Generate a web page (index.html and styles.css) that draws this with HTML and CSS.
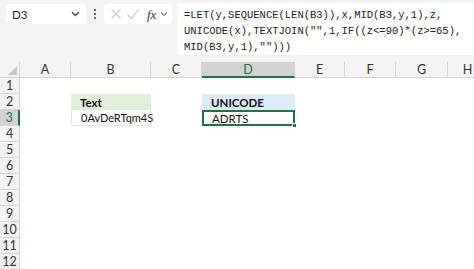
FILE: index.html
```html
<!DOCTYPE html>
<html>
<head>
<meta charset="utf-8">
<link rel="stylesheet" href="styles.css">
</head>
<body>
<div class="app">
  <div class="toolbar">
    <div class="namebox">
      <span class="ref">D3</span>
      <svg class="chev" width="9" height="6" viewBox="0 0 9 6"><path d="M1 1l3.5 3.5L8 1" fill="none" stroke="#444" stroke-width="1.3"/></svg>
    </div>
    <div class="dots">
      <svg width="4" height="12" viewBox="0 0 4 12"><circle cx="2" cy="2" r="1.1" fill="#444"/><circle cx="2" cy="6" r="1.1" fill="#444"/><circle cx="2" cy="10" r="1.1" fill="#444"/></svg>
    </div>
    <div class="fxbox">
      <svg width="12" height="12" viewBox="0 0 12 12"><path d="M1.5 1.5l9 9M10.5 1.5l-9 9" stroke="#c8c8c8" stroke-width="1.2"/></svg>
      <svg width="14" height="12" viewBox="0 0 14 12"><path d="M1.5 6.5l4 4L12.5 1.5" fill="none" stroke="#c8c8c8" stroke-width="1.2"/></svg>
      <span class="fx">fx</span>
      <svg class="chev" width="8" height="6" viewBox="0 0 8 6"><path d="M1 1.5l3 3 3-3" fill="none" stroke="#888" stroke-width="1.1"/></svg>
    </div>
    <div class="formula">=LET(y,SEQUENCE(LEN(B3)),x,MID(B3,y,1),z,<br>UNICODE(x),TEXTJOIN("",1,IF((z&lt;=90)*(z&gt;=65),<br>MID(B3,y,1),"")))</div>
  </div>
  <div class="sheet">
    <div class="corner"><span class="tri"></span></div>
    <div class="ch">A</div>
    <div class="ch">B</div>
    <div class="ch">C</div>
    <div class="ch sel">D</div>
    <div class="ch">E</div>
    <div class="ch">F</div>
    <div class="ch">G</div>
    <div class="ch">H</div>

    <div class="rh">1</div><div class="c"></div><div class="c"></div><div class="c"></div><div class="c"></div><div class="c"></div><div class="c"></div><div class="c"></div><div class="c"></div>
    <div class="rh">2</div><div class="c"></div><div class="c hdr-green">Text</div><div class="c"></div><div class="c hdr-blue">UNICODE</div><div class="c"></div><div class="c"></div><div class="c"></div><div class="c"></div>
    <div class="rh rsel">3</div><div class="c"></div><div class="c val">0AvDeRTqm4S</div><div class="c"></div><div class="c active">ADRTS<span class="handle"></span></div><div class="c"></div><div class="c"></div><div class="c"></div><div class="c"></div>
    <div class="rh">4</div><div class="c"></div><div class="c"></div><div class="c"></div><div class="c"></div><div class="c"></div><div class="c"></div><div class="c"></div><div class="c"></div>
    <div class="rh">5</div><div class="c"></div><div class="c"></div><div class="c"></div><div class="c"></div><div class="c"></div><div class="c"></div><div class="c"></div><div class="c"></div>
    <div class="rh">6</div><div class="c"></div><div class="c"></div><div class="c"></div><div class="c"></div><div class="c"></div><div class="c"></div><div class="c"></div><div class="c"></div>
    <div class="rh">7</div><div class="c"></div><div class="c"></div><div class="c"></div><div class="c"></div><div class="c"></div><div class="c"></div><div class="c"></div><div class="c"></div>
    <div class="rh">8</div><div class="c"></div><div class="c"></div><div class="c"></div><div class="c"></div><div class="c"></div><div class="c"></div><div class="c"></div><div class="c"></div>
    <div class="rh">9</div><div class="c"></div><div class="c"></div><div class="c"></div><div class="c"></div><div class="c"></div><div class="c"></div><div class="c"></div><div class="c"></div>
    <div class="rh">10</div><div class="c"></div><div class="c"></div><div class="c"></div><div class="c"></div><div class="c"></div><div class="c"></div><div class="c"></div><div class="c"></div>
    <div class="rh">11</div><div class="c"></div><div class="c"></div><div class="c"></div><div class="c"></div><div class="c"></div><div class="c"></div><div class="c"></div><div class="c"></div>
    <div class="rh">12</div><div class="c"></div><div class="c"></div><div class="c"></div><div class="c"></div><div class="c"></div><div class="c"></div><div class="c"></div><div class="c"></div>
  </div>
</div>
</body>
</html>
```
FILE: styles.css
```css
* { box-sizing: border-box; }
html, body { margin: 0; padding: 0; background: #fff; overflow: hidden; }
.app { width: 474px; height: 269px; overflow: hidden; font-family: "Lato", "Liberation Sans", sans-serif; }
.toolbar {
  height: 62px;
  background: #f3f3f3;
  display: flex;
  align-items: flex-start;
  padding: 3px 0 0 6px;
}
.namebox {
  width: 80px; height: 20px; margin-top: 1px;
  background: #fff; border-radius: 4px;
  display: flex; align-items: center; justify-content: space-between;
  padding: 0 6px 0 6px;
  font-size: 11.5px; color: #222;
}
.dots { width: 18px; height: 20px; margin-top: 1px; display: flex; align-items: center; justify-content: center; }
.fxbox {
  width: 68px; height: 20px; margin-top: 1px;
  background: #fff; border-radius: 4px;
  display: flex; align-items: center; gap: 4px;
  padding: 0 3px 0 6px;
}
.fx { font-family: "Liberation Serif", serif; font-style: italic; font-size: 13px; color: #333; margin-left: 3px; line-height: 1; }
.formula {
  margin-left: 5px;
  flex: 1;
  height: 52px;
  background: #fff;
  border-radius: 4px 0 0 4px;
  padding: 4px 0 0 7px;
  font-family: "Liberation Mono", monospace;
  font-size: 10.5px;
  line-height: 16px;
  color: #222;
  white-space: nowrap;
}
.sheet {
  display: grid;
  grid-template-columns: 20px 51px 80px 51px 93px 50px 51px 52px 40px;
  grid-auto-rows: 16px;
  font-size: 11px;
}
.corner { background: #f3f3f3; border-right: 1px solid #d4d4d4; border-bottom: 1px solid #d4d4d4; position: relative; }
.tri { position: absolute; right: 2px; bottom: 2px; width: 0; height: 0; border-left: 9px solid transparent; border-bottom: 9px solid #c6c6c6; }
.ch {
  background: #f3f3f3; color: #333; font-size: 12.5px;
  border-right: 1px solid #d4d4d4; border-bottom: 1px solid #d4d4d4;
  display: flex; align-items: center; justify-content: center;
}
.ch.sel { background: #d2d2d2; border-bottom: 2px solid #217346; color: #217346; }
.rh {
  background: #f3f3f3; color: #333; font-size: 12.5px;
  border-right: 1px solid #d4d4d4; border-bottom: 1px solid #d4d4d4;
  display: flex; align-items: center; justify-content: center;
}
.rh.rsel { background: #d2d2d2; border-right: 2px solid #217346; color: #217346; }
.c { display: flex; align-items: center; padding-left: 3px; color: #111; white-space: nowrap; }
.hdr-green { background: #e2efda; font-weight: bold; padding-left: 9px; font-size: 11.5px; }
.hdr-blue { background: #ddebf7; font-weight: bold; padding-left: 9px; font-size: 11.5px; }
.val { border: 1px solid #e4e4e4; border-top: none; padding-left: 9px; }
.active { border: 2px solid #217346; padding-left: 8px; position: relative; font-size: 11.5px; }
.handle { position: absolute; right: -4px; bottom: -4px; width: 5px; height: 5px; background: #217346; border: 1px solid #fff; }
```
